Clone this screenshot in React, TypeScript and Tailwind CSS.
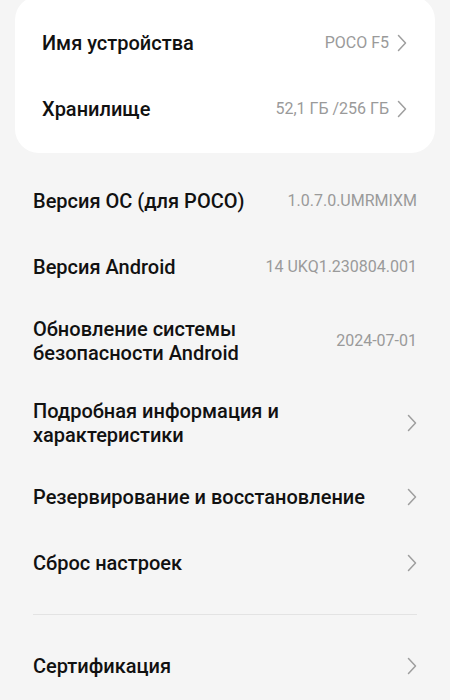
import React from "react";

type Row = {
  title: string[];
  value?: string;
  chevron?: boolean;
};

const cardRows: Row[] = [
  { title: ["Имя устройства"], value: "POCO F5", chevron: true },
  { title: ["Хранилище"], value: "52,1 ГБ /256 ГБ", chevron: true },
];

const listRows: Row[] = [
  { title: ["Версия ОС (для POCO)"], value: "1.0.7.0.UMRMIXM" },
  { title: ["Версия Android"], value: "14 UKQ1.230804.001" },
  { title: ["Обновление системы", "безопасности Android"], value: "2024-07-01" },
  { title: ["Подробная информация и", "характеристики"], chevron: true },
  { title: ["Резервирование и восстановление"], chevron: true },
  { title: ["Сброс настроек"], chevron: true },
];

function Chevron() {
  return (
    <svg width="10" height="18" viewBox="0 0 10 18" fill="none" className="shrink-0">
      <path d="M1.5 1.5L8.5 9L1.5 16.5" stroke="#9e9e9e" strokeWidth="1.5" strokeLinecap="round" strokeLinejoin="round" />
    </svg>
  );
}

function SettingRow({ row }: { row: Row }) {
  return (
    <div className="flex min-h-[66px] items-center justify-between gap-4 py-[17px]">
      <div className="text-[20px] leading-[24px] font-medium text-[#111111]">
        {row.title.map((line) => (
          <div key={line}>{line}</div>
        ))}
      </div>
      <div className="flex shrink-0 items-center gap-[8px]">
        {row.value && (
          <span className="text-[16px] leading-[20px] text-[#9a9a9a]">{row.value}</span>
        )}
        {row.chevron && <Chevron />}
      </div>
    </div>
  );
}

export default function App() {
  return (
    <div
      className="h-[700px] w-[450px] overflow-hidden bg-[#f5f5f5]"
      style={{ fontFamily: "Roboto, 'Noto Sans', sans-serif" }}
    >
      <div className="mx-[15px] -mt-[4px] rounded-[24px] bg-white pl-[27px] pr-[28px] pt-[14px] pb-[11px]">
        {cardRows.map((row) => (
          <SettingRow key={row.title[0]} row={row} />
        ))}
      </div>

      <div className="mt-[15px] px-[33px]">
        {listRows.map((row) => (
          <SettingRow key={row.title[0]} row={row} />
        ))}
        <div className="mt-[18px] mb-[18px] h-px bg-[#e3e3e3]" />
        <SettingRow row={{ title: ["Сертификация"], chevron: true }} />
      </div>
    </div>
  );
}
